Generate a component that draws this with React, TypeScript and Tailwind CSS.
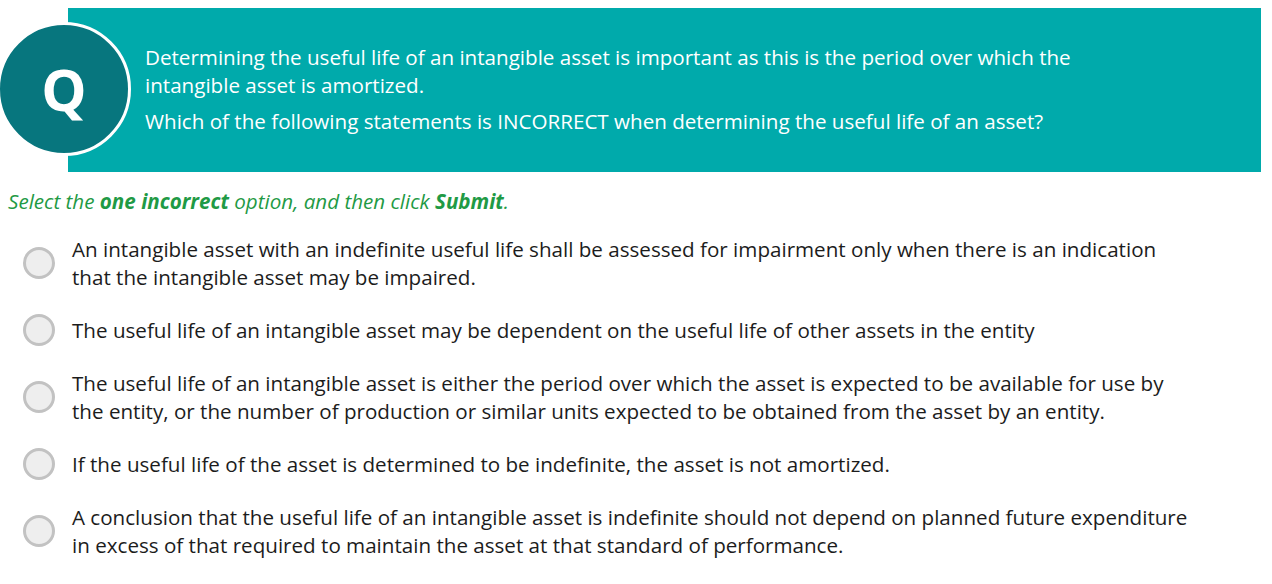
const options = [
  "An intangible asset with an indefinite useful life shall be assessed for impairment only when there is an indication that the intangible asset may be impaired.",
  "The useful life of an intangible asset may be dependent on the useful life of other assets in the entity",
  "The useful life of an intangible asset is either the period over which the asset is expected to be available for use by the entity, or the number of production or similar units expected to be obtained from the asset by an entity.",
  "If the useful life of the asset is determined to be indefinite, the asset is not amortized.",
  "A conclusion that the useful life of an intangible asset is indefinite should not depend on planned future expenditure in excess of that required to maintain the asset at that standard of performance.",
];

export default function App() {
  return (
    <div className="w-[1272px] bg-white font-['Open_Sans',sans-serif]">
      <div className="relative pt-2 pl-[68px] pr-[11px]">
        <div className="flex h-[164px] flex-col justify-center bg-[#00aaab] pb-[2px] pl-[77px] pr-10 text-[20.6px] leading-[28px] text-white">
          <p className="max-w-[960px]">
            Determining the useful life of an intangible asset is important as
            this is the period over which the intangible asset is amortized.
          </p>
          <p className="mt-2">
            Which of the following statements is INCORRECT when determining the
            useful life of an asset?
          </p>
        </div>
        <div className="absolute left-[-3px] top-[22px] flex h-[134px] w-[134px] items-center justify-center rounded-full border-[3px] border-white bg-[#07767e]">
          <span className="text-[57px] font-bold leading-none text-white">Q</span>
        </div>
      </div>

      <p className="mt-[15px] pl-2 text-[20.6px] italic leading-[28px] text-[#1f9a45]">
        Select the <b>one incorrect</b> option, and then click <b>Submit</b>.
      </p>

      <div className="mt-5 flex flex-col gap-[23px] pl-[23px] pr-10">
        {options.map((text) => (
          <label key={text} className="flex items-center gap-[17px]">
            <span className="h-8 w-8 shrink-0 rounded-full border-[3px] border-[#c2c2c2] bg-[#eeeeee]" />
            <span className="max-w-[1120px] text-[20.6px] leading-[28px] text-[#1c1c1c]">
              {text}
            </span>
          </label>
        ))}
      </div>
    </div>
  );
}
